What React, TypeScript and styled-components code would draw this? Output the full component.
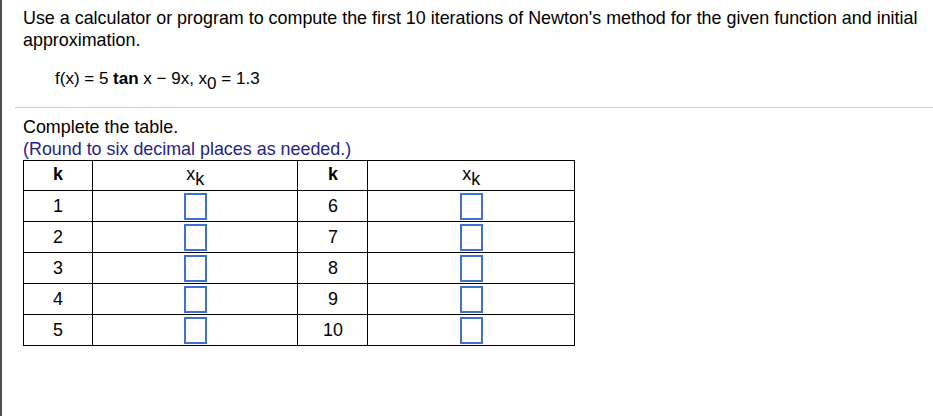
import React from "react";
import styled, { createGlobalStyle } from "styled-components";

const Global = createGlobalStyle`
  html, body { margin: 0; padding: 0; background: #fff; }
  body { font-family: "Liberation Sans", Arial, sans-serif; font-size: 17.9px; color: #000; }
`;

const Page = styled.div`
  min-height: 416px;
  border-left: 2px solid #4d4d4d;
  box-sizing: border-box;
`;

const Question = styled.div`
  padding: 7px 4px 0 21px;
`;

const Prompt = styled.p`
  margin: 0;
  line-height: 22px;
`;

const Formula = styled.div`
  margin: 17px 0 0 32px;
  line-height: 22px;
  font-size: 17px;
`;

const Sub = styled.sub`
  font-size: inherit;
  vertical-align: -5px;
  line-height: 0;
`;

const Rule = styled.hr`
  border: none;
  border-top: 1px solid #c9cad9;
  margin: 17px 0 0 13px;
`;

const Part = styled.div`
  padding: 8px 0 0 21px;
`;

const Line = styled.div<{ $tone?: string }>`
  line-height: 22px;
  color: ${(p) => p.$tone || "#000"};
`;

const Table = styled.table`
  border-collapse: collapse;
  margin-top: 0;
  width: 552px;
`;

const HeadCell = styled.th<{ $w: number }>`
  border: 1px solid #000;
  width: ${(p) => p.$w}px;
  height: 30px;
  padding: 0;
  font-weight: normal;
  text-align: center;
  vertical-align: top;
  line-height: 22px;
  padding-top: 2px;
  box-sizing: border-box;
`;

const Bold = styled.b`
  font-weight: bold;
`;

const Cell = styled.td`
  border: 1px solid #000;
  height: 31px;
  padding: 0;
  line-height: 22px;
  text-align: center;
  vertical-align: middle;
  box-sizing: border-box;
`;

const Box = styled.span`
  display: inline-block;
  box-sizing: border-box;
  width: 23px;
  height: 27px;
  border: 2px solid #3f70d4;
  vertical-align: middle;
`;

const Xk = () => (
  <span>
    x<Sub>k</Sub>
  </span>
);

export default function App() {
  const rows = [1, 2, 3, 4, 5];
  return (
    <>
      <Global />
      <Page>
        <Question>
          <Prompt>
            Use a calculator or program to compute the first 10 iterations of Newton's method for the given function and initial
            approximation.
          </Prompt>
          <Formula>
            f(x) = 5 <Bold>tan</Bold> x − 9x, x<Sub>0</Sub> = 1.3
          </Formula>
        </Question>
        <Rule />
        <Part>
          <Line>Complete the table.</Line>
          <Line $tone="#24248a">(Round to six decimal places as needed.)</Line>
          <Table>
            <thead>
              <tr>
                <HeadCell $w={69}>
                  <Bold>k</Bold>
                </HeadCell>
                <HeadCell $w={206}>
                  <Xk />
                </HeadCell>
                <HeadCell $w={70}>
                  <Bold>k</Bold>
                </HeadCell>
                <HeadCell $w={207}>
                  <Xk />
                </HeadCell>
              </tr>
            </thead>
            <tbody>
              {rows.map((k) => (
                <tr key={k}>
                  <Cell>{k}</Cell>
                  <Cell>
                    <Box />
                  </Cell>
                  <Cell>{k + 5}</Cell>
                  <Cell>
                    <Box />
                  </Cell>
                </tr>
              ))}
            </tbody>
          </Table>
        </Part>
      </Page>
    </>
  );
}
